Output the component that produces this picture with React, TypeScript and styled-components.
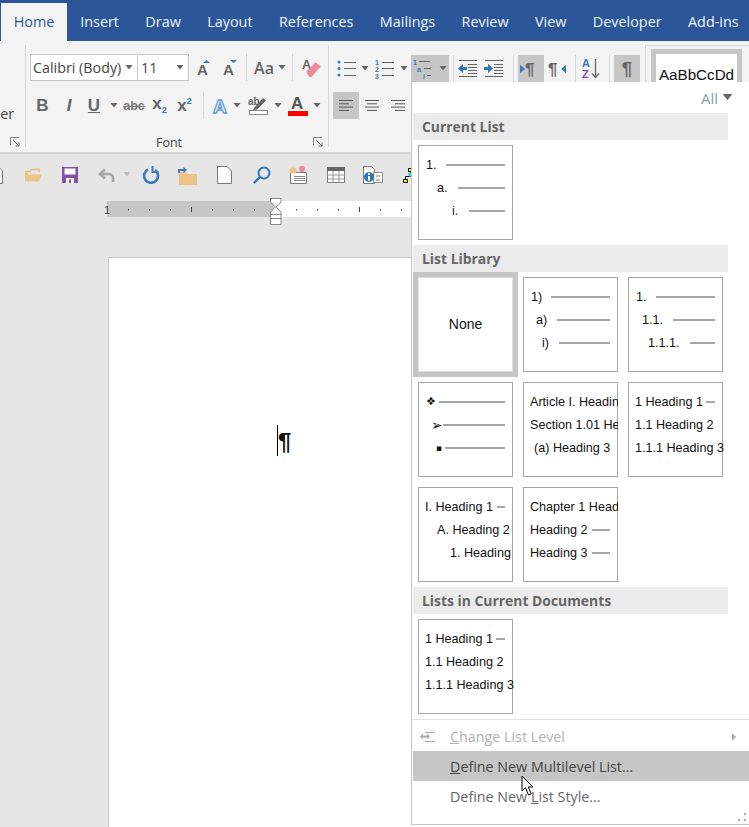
import { FC, ReactNode } from 'react';
import styled, { createGlobalStyle } from 'styled-components';

const GlobalStyle = createGlobalStyle`
  html, body {
    margin: 0;
    padding: 0;
    background: #e6e6e6;
  }
  * {
    box-sizing: border-box;
  }
`;

const UI_FONT = `"Open Sans", "Noto Sans", sans-serif`;
const THUMB_FONT = `"Liberation Sans", Arial, sans-serif`;

// ---- data for the gallery ----
interface ThumbRow {
  text: string;
  indent: number;
  label?: number; // distance from the text start to the line start
  noLine?: boolean;
  symbol?: number; // font size of a bullet glyph
}

interface ThumbData {
  rows: ThumbRow[];
  bleed?: boolean;
}

const currentList: ThumbData = {
  rows: [
    { text: '1.', indent: 7, label: 20 },
    { text: 'a.', indent: 18, label: 21 },
    { text: 'i.', indent: 33, label: 17 },
  ],
};

const headingThumb: ThumbData = {
  bleed: true,
  rows: [
    { text: '1 Heading 1', indent: 6, label: 71 },
    { text: '1.1 Heading 2', indent: 6, noLine: true },
    { text: '1.1.1 Heading 3', indent: 6, noLine: true },
  ],
};

const libraryRows: ThumbData[][] = [
  [
    {
      rows: [
        { text: '1)', indent: 7, label: 20 },
        { text: 'a)', indent: 12, label: 21 },
        { text: 'i)', indent: 18, label: 17 },
      ],
    },
    {
      rows: [
        { text: '1.', indent: 7, label: 20 },
        { text: '1.1.', indent: 13, label: 31 },
        { text: '1.1.1.', indent: 19, label: 42 },
      ],
    },
  ],
  [
    {
      rows: [
        { text: '❖', indent: 7, label: 13, symbol: 11 },
        { text: '➢', indent: 12, label: 12, symbol: 14 },
        { text: '▪', indent: 17, label: 9, symbol: 9 },
      ],
    },
    {
      rows: [
        { text: 'Article I. Heading 1', indent: 6, noLine: true },
        { text: 'Section 1.01 Heading 2', indent: 6, noLine: true },
        { text: '(a) Heading 3', indent: 10, noLine: true },
      ],
    },
    headingThumb,
  ],
  [
    {
      rows: [
        { text: 'I. Heading 1', indent: 6, label: 72 },
        { text: 'A. Heading 2', indent: 18, noLine: true },
        { text: '1. Heading', indent: 31, noLine: true },
      ],
    },
    {
      rows: [
        { text: 'Chapter 1 Heading 1', indent: 6, noLine: true },
        { text: 'Heading 2', indent: 6, label: 62 },
        { text: 'Heading 3', indent: 6, label: 62 },
      ],
    },
  ],
];

const tabs = ['Insert', 'Draw', 'Layout', 'References', 'Mailings', 'Review', 'View', 'Developer', 'Add-ins'];

// ---- small drawings ----
const Caret: FC<{ color?: string; size?: number }> = ({ color = '#666', size = 8 }) => (
  <svg width={size} height={(size * 5) / 8} viewBox="0 0 8 5"><path d="M0.500 0h7L4 4.500z" fill={color} /></svg>
);

const Launcher = () => (
  <svg width="10" height="10" viewBox="0 0 10 10" fill="none" stroke="#888">
    <path d="M.5 8V.5H9" />
    <path d="M3 3l5.500 5.500M9 5.500V9H5.500" stroke="#666" />
  </svg>
);

const Lines: FC<{ x?: number; w?: number; ys: number[]; color?: string }> = ({ x = 0, w = 12, ys, color = '#666' }) => (
  <>
    {ys.map((y) => (
      <rect key={y} x={x} y={y} width={w} height="1" fill={color} />
    ))}
  </>
);

const BulletsIcon = () => (
  <svg width="20" height="19" viewBox="0 0 20 19">
    <circle cx="2" cy="3" r="1.600" fill="#4a7ebb" />
    <circle cx="2" cy="9.500" r="1.600" fill="#4a7ebb" />
    <circle cx="2" cy="16" r="1.600" fill="#4a7ebb" />
    <Lines x={7} w={12} ys={[3, 9, 16]} />
  </svg>
);

const NumberingIcon = () => (
  <svg width="20" height="20" viewBox="0 0 20 20" fontFamily={THUMB_FONT} fontSize="7" fontWeight="700" fill="#3a78b8">
    <text x="0" y="6">1</text>
    <text x="0" y="13">2</text>
    <text x="0" y="20">3</text>
    <Lines x={7} w={12} ys={[3, 9, 16]} />
  </svg>
);

const MultiIcon = () => (
  <svg width="22" height="20" viewBox="0 0 22 20" fontFamily={THUMB_FONT} fontSize="7" fontWeight="700">
    <text x="0" y="6" fill="#3a78b8">1</text>
    <text x="4" y="13" fill="#3a78b8">a</text>
    <text x="10" y="20" fill="#3a78b8">i</text>
    <rect x="6" y="2" width="11" height="1" fill="#666" />
    <rect x="11" y="9" width="7" height="1" fill="#666" />
    <rect x="14" y="16" width="4" height="1" fill="#666" />
  </svg>
);

const IndentIcon: FC<{ flip?: boolean }> = ({ flip }) => (
  <svg width="19" height="17" viewBox="0 0 19 17">
    {flip ? (
      <path d="M0 7h4V4l5 4.500-5 4.500V10H0z" fill="#2f74b5" />
    ) : (
      <path d="M9 7H5V4L0 8.500 5 13v-3h4z" fill="#2f74b5" />
    )}
    <Lines x={10} w={9} ys={[4, 7, 10, 13]} />
    <Lines x={1} w={18} ys={[0, 16]} />
  </svg>
);

const ParaDirIcon: FC<{ rtl?: boolean }> = ({ rtl }) => (
  <svg width="24" height="18" viewBox="0 0 24 18">
    {rtl ? <path d="M21 5v8l-5-4z" fill="#3a78b8" /> : <path d="M1 5v8l5-4z" fill="#3a78b8" />}
    <text x={rtl ? 3 : 6} y="15" fontFamily={THUMB_FONT} fontSize="17" fontWeight="700" fill="#666">¶</text>
  </svg>
);

const SortIcon = () => (
  <svg width="20" height="21" viewBox="0 0 20 21" fontFamily={THUMB_FONT} fontSize="11" fontWeight="700">
    <text x="0" y="9" fill="#3a78b8">A</text>
    <text x="0" y="20" fill="#8a4fb0">Z</text>
    <path d="M13.500 1v18M10 15.500l3.500 4 3.500-4" fill="none" stroke="#666" strokeWidth="1.300" />
  </svg>
);

const AlignIcon: FC<{ kind: 'left' | 'center' | 'right' }> = ({ kind }) => {
  const widths = [14, 10, 14, 10];
  return (
    <svg width="14" height="11" viewBox="0 0 14 11">
      {widths.map((w, i) => (
        <rect
          key={i}
          x={kind === 'left' ? 0 : kind === 'center' ? (14 - w) / 2 : 14 - w}
          y={i * 3.300}
          width={w}
          height="1"
          fill="#555"
        />
      ))}
    </svg>
  );
};

const GrowIcon: FC<{ down?: boolean }> = ({ down }) => (
  <svg width="18" height="17" viewBox="0 0 18 17">
    <text x="3" y="16" fontFamily={THUMB_FONT} fontSize="15" fontWeight="700" fill="#666">A</text>
    {down ? <path d="M10 1h7l-3.500 3z" fill="#3a78b8" /> : <path d="M9 4h7l-3.500-3z" fill="#3a78b8" />}
  </svg>
);

const ClearIcon = () => (
  <svg width="21" height="21" viewBox="0 0 20 20">
    <text x="0" y="11" fontFamily={THUMB_FONT} fontSize="12" fontWeight="700" fill="#666">A</text>
    <path d="M4 14l9-9 5 4-9 10H7z" fill="#ec8a9c" />
  </svg>
);

const TextEffectIcon = () => (
  <svg width="18" height="18" viewBox="0 0 18 18">
    <text x="1" y="16" fontFamily={THUMB_FONT} fontSize="19" fontWeight="700" fill="#fff" stroke="#5b9bd5" strokeWidth="1.300">A</text>
  </svg>
);

const HighlightIcon = () => (
  <svg width="22" height="19" viewBox="0 0 22 19">
    <text x="0" y="9" fontFamily={THUMB_FONT} fontSize="10" fontWeight="700" fill="#666">ab</text>
    <path d="M6 12l9-10 3 2.500-9 9-4 .5z" fill="#666" />
    <rect x="1.500" y="14.500" width="18" height="4" fill="#fff" stroke="#888" />
  </svg>
);

const FontColorIcon = () => (
  <svg width="20" height="20" viewBox="0 0 20 20">
    <text x="3" y="13" fontFamily={THUMB_FONT} fontSize="17" fontWeight="700" fill="#555">A</text>
    <rect x="0" y="15" width="20" height="5" fill="#f00" />
  </svg>
);

const DocOutline = () => (
  <svg width="15" height="18" viewBox="0 0 15 18">
    <path d="M.5.5h9.500L14.500 5v12.500H.5z" fill="#fff" stroke="#777" />
  </svg>
);

const OpenFolder = () => (
  <svg width="18" height="15" viewBox="0 0 18 14">
    <path d="M1 3h5l1.500-2H15v3" fill="none" stroke="#e8bd7e" strokeWidth="1.500" />
    <path d="M1 13V4h3v2h14l-3 7z" fill="#edc486" />
  </svg>
);

const SaveIcon = () => (
  <svg width="16" height="16" viewBox="0 0 16 16">
    <path d="M0 0h16v16H0z" fill="#8a4fa6" />
    <path d="M2.500 1.500h11v6h-11z" fill="#fff" />
    <path d="M4 11h8v5H4z" fill="#fff" />
    <path d="M7 12.500h2V16H7z" fill="#8a4fa6" />
  </svg>
);

const UndoIcon = () => (
  <svg width="18" height="15" viewBox="0 0 18 15" fill="none" stroke="#a6a6a6" strokeWidth="2.600">
    <path d="M7 1.500L2 6l5 4.500" />
    <path d="M2 6h9a5 4 0 0 1 4 4v4" />
  </svg>
);

const RedoIcon = () => (
  <svg width="18" height="18" viewBox="0 0 18 18" fill="none" stroke="#3a78b8" strokeWidth="2.600">
    <path d="M6 3.500a7 7 0 1 0 7 .5" />
    <path d="M10.500 0v6h6" strokeWidth="2" />
  </svg>
);

const FolderArrowIcon = () => (
  <svg width="20" height="19" viewBox="0 0 20 19">
    <path d="M1 6h7l1.500 2H19v11H1z" fill="#edc486" />
    <path d="M1 7V4h5" fill="none" stroke="#3a78b8" strokeWidth="1.800" />
    <path d="M5.500 1l3.500 3-3.500 3z" fill="#3a78b8" />
  </svg>
);

const SearchIcon = () => (
  <svg width="18" height="18" viewBox="0 0 18 18" fill="none" stroke="#2f74b5" strokeWidth="2">
    <circle cx="11" cy="7" r="5.500" />
    <path d="M7 11l-6 6" strokeWidth="2.400" />
  </svg>
);

const MailIcon = () => (
  <svg width="19" height="18" viewBox="0 0 19 18">
    <path d="M1.500 6.500h16v11h-16z" fill="#fff" stroke="#777" />
    <Lines x={5} w={11} ys={[10, 12, 14]} color="#888" />
    <ellipse cx="4" cy="4.500" rx="3.800" ry="3" fill="#edc486" />
    <circle cx="13" cy="3" r="3" fill="#ec8a9c" />
  </svg>
);

const TableIcon = () => (
  <svg width="18" height="16" viewBox="0 0 18 16">
    <path d="M.5.500h17v15H.5z" fill="#fff" stroke="#777" />
    <path d="M0 0h18v4H0z" fill="#666" />
    <path d="M6 4v12M12 4v12M0 8h18M0 12h18" stroke="#999" />
  </svg>
);

const InfoIcon = () => (
  <svg width="20" height="18" viewBox="0 0 20 18">
    <path d="M.5.500h8l3 3v14H.5z" fill="#fff" stroke="#777" />
    <path d="M10.500 6.500h9v10h-9z" fill="#fff" stroke="#888" />
    <path d="M13 9h4v2h-4zM13 13h4v2h-4z" fill="#bbb" />
    <circle cx="6" cy="11" r="5" fill="#2f74b5" />
    <path d="M5 10h2v4.500H5zM5 7h2v2H5z" fill="#fff" />
  </svg>
);

const NetworkIcon = () => (
  <svg width="10" height="15" viewBox="0 0 10 15" fill="#fff" stroke="#000">
    <path d="M5.500.500h4v3h-4z" fill="#ff0" />
    <path d="M.500 11.500h4v3h-4z" fill="#ff0" />
    <path d="M2.500 11.500V8.500h5V3.500" fill="none" />
    <path d="M6 5h4v3H6z" fill="#3cc" stroke="#3cc" />
  </svg>
);

const ChangeLevelIcon = () => (
  <svg width="15" height="10" viewBox="0 0 15 10">
    <path d="M0 4.500l3-3v2h4v-2l3 3-3 3v-2H3v2z" fill="#aaa" />
    <Lines x={5} w={10} ys={[0, 9]} color="#aaa" />
  </svg>
);

const RulerDrawing = () => {
  const dots = [128, 149, 170, 212, 233, 254, 296, 317, 338, 380, 401];
  return (
    <svg width="330" height="28" viewBox="104 198 330 28">
      <rect x="107" y="201" width="167" height="16" fill="#c6c6c6" />
      <rect x="274" y="201" width="138" height="16" fill="#fff" />
      <text x="104" y="214" fontFamily={THUMB_FONT} fontSize="11" fill="#444">1</text>
      {dots.map((x) => (
        <rect key={x} x={x} y="209" width="1" height="1.500" fill="#444" />
      ))}
      <rect x="191" y="207" width="1" height="5" fill="#444" />
      <rect x="359" y="207" width="1" height="5" fill="#444" />
      <path
        d="M270.500 198.500h10.500v3.500l-5 5 5 5v3.500h-10.500v-3.500l5-5-5-5z"
        fill="#fff"
        stroke="#888"
      />
      <path d="M270.500 214.500h10.500v10h-10.500z" fill="#fff" stroke="#888" />
      <path d="M270.500 218.500h10.500" stroke="#888" />
    </svg>
  );
};

// ---- thumbnails ----
const Thumb: FC<{ data: ThumbData }> = ({ data }) => (
  <ThumbBox $bleed={data.bleed}>
    {data.rows.map((row) => (
      <ThumbLine key={row.text} $indent={row.indent}>
        <ThumbText $width={row.label} $symbol={row.symbol}>{row.text}</ThumbText>
        {!row.noLine && <ThumbRule />}
      </ThumbLine>
    ))}
  </ThumbBox>
);

const Section: FC<{ title: string; children: ReactNode }> = ({ title, children }) => (
  <>
    <SectionHead>{title}</SectionHead>
    <ThumbGrid>{children}</ThumbGrid>
  </>
);

const App: FC = () => (
  <Screen>
    <GlobalStyle />
    <TabBar>
      <ActiveTab>Home</ActiveTab>
      {tabs.map((t) => (
        <Tab key={t}>{t}</Tab>
      ))}
    </TabBar>

    <Ribbon>
      <ClipboardGroup>
        <ClipLabel>Format Painter</ClipLabel>
        <ClipFoot><Launcher /></ClipFoot>
      </ClipboardGroup>

      <FontGroup>
        <ToolRow>
          <FontBox>
            <FontName>Calibri (Body)</FontName>
            <Caret />
          </FontBox>
          <SizeBox>
            <FontName>11</FontName>
            <Caret />
          </SizeBox>
          <Cell $w={27}><GrowIcon /></Cell>
          <Cell $w={25}><GrowIcon down /></Cell>
          <ToolSep $ml={5} />
          <Cell $w={40} $ml={3}><CaseText>Aa</CaseText><CaretGap><Caret /></CaretGap></Cell>
          <ToolSep $ml={2} />
          <Cell $w={32} $ml={3}><ClearIcon /></Cell>
        </ToolRow>
        <ToolRow>
          <Cell $w={25}><FormatLetter>B</FormatLetter></Cell>
          <Cell $w={28}><FormatLetter $italic>I</FormatLetter></Cell>
          <Cell $w={22}><FormatLetter $underline>U</FormatLetter></Cell>
          <Cell $w={17}><Caret /></Cell>
          <Cell $w={24}><StrikeText>abc</StrikeText></Cell>
          <Cell $w={27}><FormatLetter>x<SubMark>2</SubMark></FormatLetter></Cell>
          <Cell $w={23}><FormatLetter>x<SupMark>2</SupMark></FormatLetter></Cell>
          <ToolSep $ml={7} />
          <Cell $w={24} $ml={5}><TextEffectIcon /></Cell>
          <Cell $w={8}><Caret /></Cell>
          <Cell $w={24} $ml={6}><HighlightIcon /></Cell>
          <Cell $w={14}><Caret /></Cell>
          <Cell $w={24} $ml={1}><FontColorIcon /></Cell>
          <Cell $w={14}><Caret /></Cell>
        </ToolRow>
        <GroupFoot>
          <span>Font</span>
          <FootLauncher><Launcher /></FootLauncher>
        </GroupFoot>
      </FontGroup>

      <ParagraphGroup>
        <ToolRow>
          <Cell $w={23} $ml={6}><BulletsIcon /></Cell>
          <Cell $w={14}><Caret /></Cell>
          <Cell $w={24} $ml={1}><NumberingIcon /></Cell>
          <Cell $w={14}><Caret /></Cell>
          <Cell $w={38} $on><MultiIcon /><CaretGap><Caret /></CaretGap></Cell>
          <ToolSep $ml={4} />
          <Cell $w={26} $ml={0}><IndentIcon /></Cell>
          <Cell $w={27}><IndentIcon flip /></Cell>
          <ToolSep $ml={6} />
          <Cell $w={26} $ml={4} $on><ParaDirIcon /></Cell>
          <Cell $w={26}><ParaDirIcon rtl /></Cell>
          <ToolSep $ml={5} />
          <Cell $w={32}><SortIcon /></Cell>
          <ToolSep $ml={1} />
          <Cell $w={26} $ml={4} $on><PilcrowTool>¶</PilcrowTool></Cell>
        </ToolRow>
        <ToolRow>
          <Cell $w={26} $ml={4} $on><AlignIcon kind="left" /></Cell>
          <Cell $w={26}><AlignIcon kind="center" /></Cell>
          <Cell $w={26}><AlignIcon kind="right" /></Cell>
        </ToolRow>
      </ParagraphGroup>

      <StylesGroup>
        <StyleCard>AaBbCcDd</StyleCard>
      </StylesGroup>
    </Ribbon>

    <QuickBar>
      <QuickCell><DocOutline /></QuickCell>
      <QuickCell><OpenFolder /></QuickCell>
      <QuickCell><SaveIcon /></QuickCell>
      <QuickCell $w={44}><UndoLeft><UndoIcon /></UndoLeft><UndoCaret><Caret color="#bbb" /></UndoCaret></QuickCell>
      <QuickCell><RedoIcon /></QuickCell>
      <QuickCell><FolderArrowIcon /></QuickCell>
      <QuickCell><DocOutline /></QuickCell>
      <QuickCell><SearchIcon /></QuickCell>
      <QuickCell><MailIcon /></QuickCell>
      <QuickCell><TableIcon /></QuickCell>
      <QuickCell><InfoIcon /></QuickCell>
      <QuickCell $w={33}><NetworkIcon /></QuickCell>
    </QuickBar>

    <RulerRow>
      <RulerDrawing />
    </RulerRow>

    <DocPage>
      <InsertionPoint>¶</InsertionPoint>
    </DocPage>

    <ListMenu>
      <FilterRow>All<Caret size={11} /></FilterRow>
      <Section title="Current List">
        <Thumb data={currentList} />
      </Section>
      <SectionHead>List Library</SectionHead>
      <ThumbGrid>
        <NoneThumb>None</NoneThumb>
        {libraryRows.flat().map((t) => (
          <Thumb key={t.rows[0].text + t.rows[1].text} data={t} />
        ))}
      </ThumbGrid>
      <Section title="Lists in Current Documents">
        <Thumb data={headingThumb} />
      </Section>
      <MenuItems>
        <MenuItem $disabled>
          <MenuIcon><ChangeLevelIcon /></MenuIcon>
          <span><u>C</u>hange List Level</span>
          <SubArrow />
        </MenuItem>
        <MenuItem $active>
          <MenuIcon />
          <span><u>D</u>efine New Multilevel List...</span>
        </MenuItem>
        <MenuItem>
          <MenuIcon />
          <span>Define New <u>L</u>ist Style...</span>
        </MenuItem>
      </MenuItems>
      <Grip>
        <svg width="9" height="9" viewBox="0 0 9 9" fill="#aaa">
          <rect x="6" y="0" width="2" height="2" />
          <rect x="0" y="6" width="2" height="2" />
          <rect x="6" y="6" width="2" height="2" />
        </svg>
      </Grip>
      <Pointer>
        <svg width="14" height="22" viewBox="0 0 14 22">
          <path d="M1 1v15l3.500-3.300L7.500 20l2.800-1.200-3-6.800H12z" fill="#fff" stroke="#000" />
        </svg>
      </Pointer>
    </ListMenu>
  </Screen>
);

const Screen = styled.div`
  position: relative;
  width: 749px;
  height: 827px;
  overflow: hidden;
  display: flex;
  flex-direction: column;
  background: #e6e6e6;
  font-family: ${UI_FONT};
`;

const TabBar = styled.div`
  display: flex;
  align-items: flex-end;
  height: 41px;
  flex-shrink: 0;
  padding-left: 1px;
  background: #2b579a;
`;

const Tab = styled.div`
  flex-shrink: 0;
  padding: 0 13.2px;
  height: 38px;
  line-height: 37px;
  font-size: 14.4px;
  white-space: nowrap;
  color: #f1f4f9;
`;

const ActiveTab = styled(Tab)`
  width: 66px;
  padding: 0;
  text-align: center;
  background: #f3f3f3;
  color: #2b579a;
`;

const Ribbon = styled.div`
  display: flex;
  flex-shrink: 0;
  height: 113px;
  padding: 4px 0 5px;
  background: #f3f3f3;
  border-bottom: 2px solid #d4d4d4;
  font-family: ${UI_FONT};
`;

const ClipboardGroup = styled.div`
  display: flex;
  flex-direction: column;
  width: 26px;
  overflow: hidden;
  border-right: 1px solid #d6d6d6;
`;

const ClipLabel = styled.div`
  display: flex;
  justify-content: flex-end;
  margin-top: 59px;
  padding-right: 11px;
  white-space: nowrap;
  font-size: 14.3px;
  color: #444;
`;

const ClipFoot = styled.div`
  display: flex;
  justify-content: flex-end;
  margin-top: auto;
  padding: 0 5px 0 0;
  height: 10px;
`;

const FontGroup = styled.div`
  position: relative;
  display: flex;
  flex-direction: column;
  gap: 11px;
  width: 303px;
  padding: 9px 0 0 4px;
  border-right: 1px solid #d6d6d6;
`;

const ToolRow = styled.div`
  display: flex;
  align-items: center;
  height: 27px;
  flex-shrink: 0;
`;

const FontBox = styled.div`
  display: flex;
  align-items: center;
  justify-content: space-between;
  width: 108px;
  height: 27px;
  padding: 0 4px 0 2px;
  background: #fff;
  border: 1px solid #c6c6c6;
  overflow: hidden;
`;

const SizeBox = styled(FontBox)`
  width: 52px;
  margin-left: -1px;
  padding: 0 4px 0 3px;
`;

const FontName = styled.span`
  font-size: 14.3px;
  color: #444;
  white-space: nowrap;
`;

const Cell = styled.div<{ $w: number; $ml?: number; $on?: boolean }>`
  display: flex;
  align-items: center;
  justify-content: center;
  flex-shrink: 0;
  height: 27px;
  width: ${(p) => p.$w}px;
  margin-left: ${(p) => p.$ml ?? 0}px;
  background: ${(p) => (p.$on ? '#c6c6c6' : 'transparent')};
`;

const CaretGap = styled.span`
  display: flex;
  margin-left: 4px;
`;

const ToolSep = styled.div<{ $ml: number }>`
  width: 1px;
  height: 27px;
  flex-shrink: 0;
  margin-left: ${(p) => p.$ml}px;
  background: #d6d6d6;
`;

const CaseText = styled.span`
  font-size: 16px;
  font-weight: 600;
  color: #666;
`;

const FormatLetter = styled.span<{ $italic?: boolean; $underline?: boolean }>`
  font-family: ${THUMB_FONT};
  font-size: 17px;
  font-weight: 700;
  line-height: 1;
  color: #666;
  font-style: ${(p) => (p.$italic ? 'italic' : 'normal')};
  text-decoration: ${(p) => (p.$underline ? 'underline' : 'none')};
`;

const SubMark = styled.sub`
  font-size: 9px;
  color: #3a78b8;
`;

const SupMark = styled.sup`
  font-size: 9px;
  color: #3a78b8;
`;

const StrikeText = styled.span`
  font-family: ${THUMB_FONT};
  font-size: 12.5px;
  font-weight: 700;
  color: #777;
  text-decoration: line-through;
`;

const GroupFoot = styled.div`
  display: flex;
  justify-content: center;
  margin: auto 0 -5px;
  padding-right: 20px;
  height: 18px;
  line-height: 18px;
  font-size: 12.5px;
  color: #444;
`;

const FootLauncher = styled.span`
  position: absolute;
  right: 5px;
  bottom: 0;
  display: flex;
`;

const ParagraphGroup = styled.div`
  display: flex;
  flex-direction: column;
  gap: 10px;
  width: 317px;
  padding-top: 10px;
  border-right: 1px solid #d6d6d6;
`;

const PilcrowTool = styled.span`
  font-family: ${THUMB_FONT};
  font-size: 19px;
  font-weight: 700;
  color: #666;
`;

const StylesGroup = styled.div`
  flex: 1;
  padding: 3px 0 0 5px;
  border-top: 1px solid #d6d6d6;
`;

const StyleCard = styled.div`
  width: 91px;
  height: 60px;
  padding-top: 12px;
  border: 5px solid #c6c6c6;
  background: #fff;
  text-align: center;
  font-family: "Liberation Sans", sans-serif;
  font-size: 15.2px;
  line-height: 18px;
  white-space: nowrap;
  color: #111;
`;

const QuickBar = styled.div`
  display: flex;
  align-items: center;
  flex-shrink: 0;
  height: 42px;
  margin-left: -23px;
`;

const QuickCell = styled.div<{ $w?: number }>`
  position: relative;
  display: flex;
  align-items: center;
  justify-content: flex-start;
  flex-shrink: 0;
  width: ${(p) => p.$w ?? 37}px;
  & > svg {
    margin: 0 auto;
  }
`;

const UndoLeft = styled.span`
  display: flex;
  margin-left: 10px;
`;

const UndoCaret = styled.span`
  position: absolute;
  left: 35px;
  top: 50%;
  margin-top: -3px;
  display: flex;
`;

const RulerRow = styled.div`
  display: flex;
  flex-shrink: 0;
  height: 28px;
  margin-top: 2px;
  padding-left: 104px;
`;

const DocPage = styled.div`
  flex: 1;
  margin: 31px 0 0 108px;
  padding: 167px 0 0 168px;
  background: #fff;
  border-top: 1px solid #c8c8c8;
  border-left: 1px solid #c8c8c8;
`;

const InsertionPoint = styled.div`
  width: 20px;
  height: 31px;
  padding-left: 0;
  border-left: 1px solid #000;
  font-family: ${THUMB_FONT};
  font-size: 24px;
  font-weight: 700;
  line-height: 33px;
  color: #111;
`;

const ListMenu = styled.div`
  position: absolute;
  left: 411px;
  top: 82px;
  right: 0;
  height: 743px;
  padding-left: 1px;
  background: #fff;
  border-left: 1px solid #c6c6c6;
  border-bottom: 1.5px solid #c6c6c6;
`;

const FilterRow = styled.div`
  display: flex;
  align-items: center;
  justify-content: flex-end;
  gap: 4px;
  height: 31px;
  padding-right: 16px;
  font-size: 15px;
  color: #7f9db9;
`;

const SectionHead = styled.div`
  width: 315px;
  height: 27px;
  padding-left: 9px;
  line-height: 27px;
  background: #ebebeb;
  font-size: 13.9px;
  font-weight: 700;
  white-space: nowrap;
  color: #666;
`;

const ThumbGrid = styled.div`
  display: grid;
  grid-template-columns: repeat(3, 95px);
  grid-auto-rows: 95px;
  gap: 10px;
  padding: 5px 0 5px 5px;
`;

const ThumbBox = styled.div<{ $bleed?: boolean }>`
  padding: 7px 7px 0 0;
  background: #fff;
  border: 1px solid #a6a6a6;
  overflow: clip;
  overflow-clip-margin: ${(p) => (p.$bleed ? 3 : 1)}px;
`;

const NoneThumb = styled(ThumbBox)`
  display: flex;
  align-items: center;
  justify-content: center;
  padding: 0 0 2px;
  border-color: #dedede;
  box-shadow: 0 0 0 5px #c6c6c6;
  font-family: ${THUMB_FONT};
  font-size: 14px;
  color: #111;
`;

const ThumbLine = styled.div<{ $indent: number }>`
  display: flex;
  align-items: center;
  height: 23px;
  padding-left: ${(p) => p.$indent}px;
`;

const ThumbText = styled.span<{ $width?: number; $symbol?: number }>`
  flex-shrink: 0;
  width: ${(p) => (p.$width ? `${p.$width}px` : 'auto')};
  white-space: nowrap;
  font-family: ${(p) => (p.$symbol ? '"DejaVu Sans", sans-serif' : THUMB_FONT)};
  font-size: ${(p) => p.$symbol ?? 12.6}px;
  color: #111;
`;

const ThumbRule = styled.span`
  flex: 1;
  height: 2px;
  background: #a6a6a6;
`;

const MenuItems = styled.div`
  border-top: 1px solid #e1e1e1;
  padding-top: 1px;
`;

const MenuItem = styled.div<{ $active?: boolean; $disabled?: boolean }>`
  display: flex;
  align-items: center;
  height: 30px;
  padding-top: 1px;
  font-size: 14.3px;
  white-space: nowrap;
  background: ${(p) => (p.$active ? '#c6c6c6' : 'transparent')};
  color: ${(p) => (p.$disabled ? '#b1b1b1' : p.$active ? '#444' : '#666')};
`;

const MenuIcon = styled.span`
  display: flex;
  align-items: center;
  width: 37px;
  padding-left: 7px;
`;

const SubArrow = styled.span`
  margin-left: auto;
  margin-right: 13px;
  border-left: 4px solid #aaa;
  border-top: 4px solid transparent;
  border-bottom: 4px solid transparent;
`;

const Grip = styled.div`
  display: flex;
  justify-content: flex-end;
  padding: 2px 2px 0 0;
`;

const Pointer = styled.div`
  position: absolute;
  left: 109px;
  top: 693px;
  display: flex;
`;

export default App;
